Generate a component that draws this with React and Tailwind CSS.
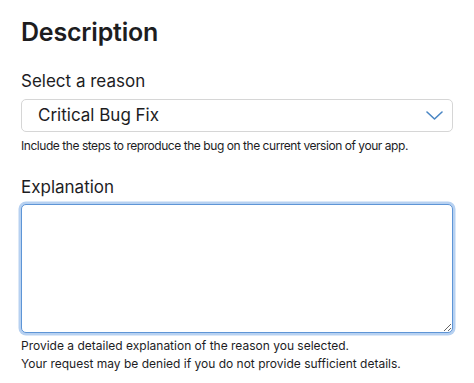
import React, { useState } from 'react'

const reasons = ['Critical Bug Fix', 'Security Issue', 'Time-sensitive Event', 'Other']

const App = () => {
  const [reason, setReason] = useState(reasons[0])
  const [text, setText] = useState('')

  return (
    <div className="min-h-screen bg-white px-[21px] pt-[15px] font-['Inter','Noto_Sans',sans-serif] text-[#1d1d1f]">
      <h2 className="text-[25px] leading-[34px] font-semibold tracking-[-0.2px]">Description</h2>

      {/* ---------------- Reason ---------------- */}
      <label className="mt-[21px] block text-[17px] leading-[22px]">Select a reason</label>
      <div className="relative mt-[7px]">
        <select
          value={reason}
          onChange={e => setReason(e.target.value)}
          className="block h-[33px] w-full appearance-none rounded-[5px] border border-[#d6d6d6] bg-white pl-[16px] pr-10 text-[17px] text-[#1d1d1f] outline-none"
        >
          {reasons.map(r => (
            <option key={r} value={r}>{r}</option>
          ))}
        </select>
        <svg
          className="pointer-events-none absolute right-[10px] top-[12px]"
          width="17"
          height="9"
          viewBox="0 0 17 9"
          fill="none"
        >
          <path d="M1 1l7.5 7L16 1" stroke="#4a86c4" strokeWidth="1.6" strokeLinecap="round" strokeLinejoin="round" />
        </svg>
      </div>
      <p className="mt-[5px] text-[12px] leading-[18px] tracking-[-0.45px] text-[#1d1d1f]">
        Include the steps to reproduce the bug on the current version of your app.
      </p>

      {/* ---------------- Explanation ---------------- */}
      <label className="mt-[21px] block text-[17px] leading-[22px]">Explanation</label>
      <textarea
        value={text}
        onChange={e => setText(e.target.value)}
        className="mt-[6px] block h-[129px] w-full rounded-[5px] border-[1.5px] border-[#5e95d6] bg-white px-3 py-2 text-[15px] outline-none ring-[2.5px] ring-[#b7d1f1]"
      />
      <div className="mt-[4px] text-[12px] leading-[18px] text-[#1d1d1f]">
        <p>Provide a detailed explanation of the reason you selected.</p>
        <p>Your request may be denied if you do not provide sufficient details.</p>
      </div>
    </div>
  )
}

export default App
